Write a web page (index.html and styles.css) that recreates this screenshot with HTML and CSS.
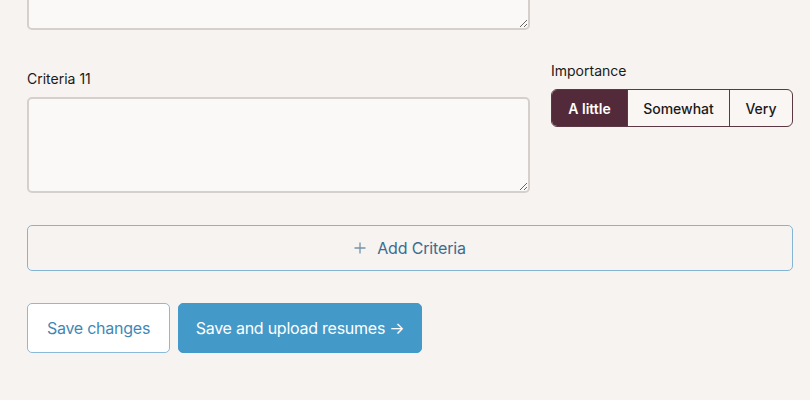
FILE: index.html
```html
<!DOCTYPE html>
<html lang="en">
<head>
<meta charset="utf-8">
<title>Criteria</title>
<link rel="stylesheet" href="styles.css">
</head>
<body>
<main class="page">
  <div class="row first">
    <div class="field">
      <textarea class="input" aria-label="Criteria 10"></textarea>
    </div>
  </div>
  <div class="row">
    <div class="field">
      <label class="label" for="c11">Criteria 11</label>
      <textarea class="input" id="c11"></textarea>
    </div>
    <div class="importance">
      <div class="label">Importance</div>
      <div class="segments">
        <button class="seg active">A little</button>
        <button class="seg">Somewhat</button>
        <button class="seg">Very</button>
      </div>
    </div>
  </div>
  <button class="add">
    <svg class="plus" width="12" height="12" viewBox="0 0 12 12"><path d="M6 0.5V11.5M0.5 6H11.5" stroke="currentColor" stroke-width="1.3" fill="none"/></svg>
    <span>Add Criteria</span>
  </button>
  <div class="actions">
    <button class="btn secondary">Save changes</button>
    <button class="btn primary">Save and upload resumes →</button>
  </div>
</main>
</body>
</html>
```

FILE: styles.css
```css
* { box-sizing: border-box; }
html, body { margin: 0; padding: 0; }
body {
  background: #f6f3f0;
  font-family: Inter, "Noto Sans", "Liberation Sans", sans-serif;
  color: #1c1c1c;
  overflow: hidden;
}
.page {
  padding: 0 17px 0 27px;
  margin-top: -66px;
  display: flex;
  flex-direction: column;
}
.row {
  display: flex;
  gap: 21px;
  align-items: flex-start;
}
.row.first { margin-bottom: 40px; }
.field {
  width: 503px;
  display: flex;
  flex-direction: column;
}
.label {
  font-size: 14px;
  line-height: 18px;
  display: block;
  margin-bottom: 9px;
  color: #1a1a1a;
}
.input {
  width: 503px;
  height: 96px;
  border: 2px solid #d5d0cb;
  border-radius: 5px;
  background: #fbf9f7;
  resize: vertical;
  font: inherit;
  margin: 0;
  display: block;
}
.importance {
  width: 242px;
  margin-top: -8px;
}
.segments {
  display: flex;
  height: 38px;
  border: 1px solid #5a3944;
  border-radius: 6px;
  overflow: hidden;
  background: #f9f6f3;
}
.seg {
  font-family: inherit;
  font-size: 14px;
  font-weight: 500;
  color: #1a1a1a;
  background: transparent;
  border: 0;
  border-left: 1px solid #5a3944;
  padding: 0;
  margin: 0;
}
.seg:first-child { border-left: 0; width: 75px; }
.seg:nth-child(2) { width: 102px; }
.seg:nth-child(3) { flex: 1; }
.seg.active {
  background: #522a3a;
  color: #ffffff;
  font-weight: 600;
}
.add {
  margin-top: 32px;
  height: 46px;
  width: 766px;
  border: 1px solid #86b5d4;
  border-radius: 5px;
  background: #f6f3f0;
  color: #3a6d8f;
  font-family: inherit;
  font-size: 16px;
  letter-spacing: -0.15px;
  display: flex;
  align-items: center;
  justify-content: center;
  gap: 11px;
}
.plus { color: #7594aa; }
.actions {
  margin-top: 32px;
  display: flex;
  gap: 8px;
}
.btn {
  height: 50px;
  border-radius: 5px;
  font-family: inherit;
  font-size: 16px;
  letter-spacing: -0.25px;
  margin: 0;
}
.secondary {
  width: 143px;
  background: #ffffff;
  border: 1px solid #8bb9d7;
  color: #3f88b6;
}
.primary {
  width: 244px;
  background: #4399c8;
  border: 1px solid #4399c8;
  color: #ffffff;
}
```
